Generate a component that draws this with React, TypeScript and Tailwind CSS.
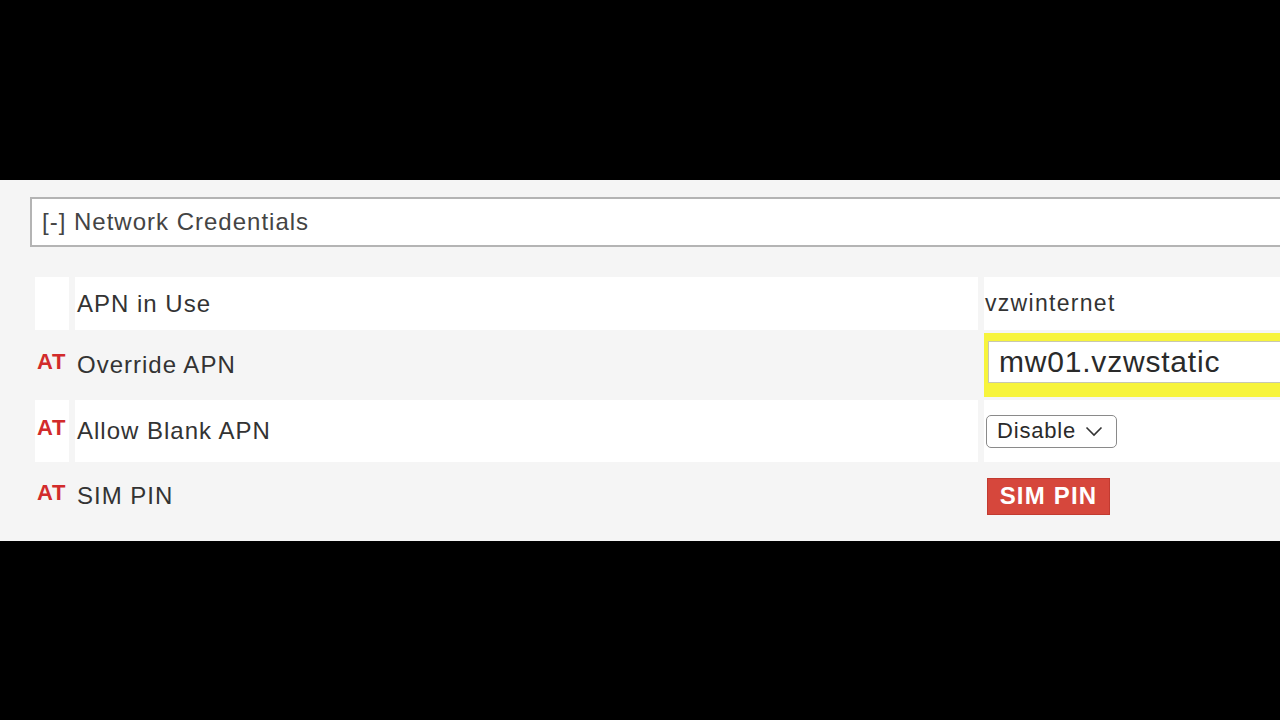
import React from 'react';

const font = { fontFamily: '"Liberation Sans", Arial, Helvetica, sans-serif' };

type Row = {
  at: boolean;
  label: string;
  white: boolean;
  height: string;
  value: React.ReactNode;
};

const App: React.FC = () => {
  const rows: Row[] = [
    {
      at: false,
      label: 'APN in Use',
      white: true,
      height: 'h-[53px]',
      value: <span className="text-[23px] tracking-[1.3px] text-[#333] pl-[1px]">vzwinternet</span>,
    },
    {
      at: true,
      label: 'Override APN',
      white: false,
      height: 'h-[70px]',
      value: (
        <div className="bg-[#f7f43c] pl-[4px] pt-[8px] pb-[14px] w-full">
          <div className="bg-white border border-[#c8c8b0] h-[42px] flex items-center pl-[10px]">
            <span className="text-[30px] tracking-[0.8px] text-[#2a2a2a] leading-none">mw01.vzwstatic</span>
          </div>
        </div>
      ),
    },
    {
      at: true,
      label: 'Allow Blank APN',
      white: true,
      height: 'h-[62px]',
      value: (
        <div className="ml-[2px] w-[131px] h-[33px] border border-[#8a8a8a] rounded-[5px] bg-white flex items-center pl-[10px] gap-[9px]">
          <span className="text-[22px] tracking-[0.8px] text-[#2a2a2a] leading-none">Disable</span>
          <svg width="18" height="11" viewBox="0 0 18 11" fill="none">
            <path d="M1.5 1.5 L9 9 L16.5 1.5" stroke="#333" strokeWidth="1.6" />
          </svg>
        </div>
      ),
    },
    {
      at: true,
      label: 'SIM PIN',
      white: false,
      height: 'h-[68px]',
      value: (
        <button className="ml-[3px] w-[123px] h-[37px] bg-[#d6473c] border border-[#c23a30] text-white font-bold text-[24px] tracking-[1.2px] leading-none flex items-center justify-center">
          SIM PIN
        </button>
      ),
    },
  ];

  return (
    <div className="w-[1280px] h-[720px] bg-black overflow-hidden" style={font}>
      <div className="mt-[180px] h-[361px] bg-[#f5f5f5] overflow-hidden">
        <div className="w-[1320px] pl-[30px] pt-[17px]">
          <div className="h-[50px] border-2 border-[#b4b4b4] bg-white flex items-center pl-[10px]">
            <span className="text-[24px] tracking-[1px] text-[#444]">[-] Network Credentials</span>
          </div>
          <div className="mt-[30px] pl-[5px]">
            {rows.map(row => (
              <div key={row.label} className={`flex gap-[6px] ${row.height}`}>
                <div
                  className={`w-[34px] shrink-0 flex items-center pl-[2px] pb-[6px] ${row.white ? 'bg-white' : ''}`}
                >
                  {row.at && (
                    <span className="text-[22px] tracking-[0.8px] font-bold text-[#d22b2b] leading-none">AT</span>
                  )}
                </div>
                <div className={`flex-1 flex items-center pl-[2px] ${row.white ? 'bg-white' : ''}`}>
                  <span className="text-[24px] tracking-[1px] text-[#333]">{row.label}</span>
                </div>
                <div className={`w-[336px] shrink-0 flex items-center ${row.white ? 'bg-white' : ''}`}>
                  {row.value}
                </div>
              </div>
            ))}
          </div>
        </div>
      </div>
    </div>
  );
};

export default App;
